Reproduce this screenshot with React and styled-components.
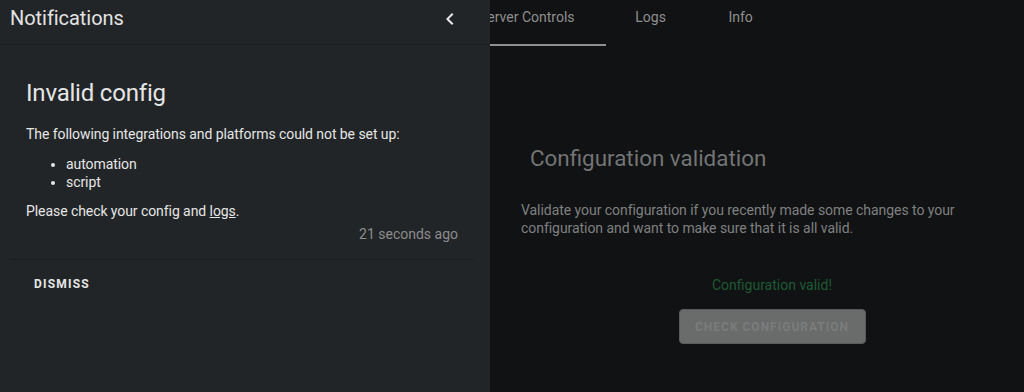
import React from "react";
import styled, { createGlobalStyle } from "styled-components";

const Global = createGlobalStyle`
  html, body { margin: 0; padding: 0; background: #111213; }
  body { font-family: Roboto, "Noto Sans", "Liberation Sans", sans-serif; }
  * { box-sizing: border-box; }
`;

const Page = styled.div`
  position: relative;
  width: 1024px;
  height: 392px;
  overflow: hidden;
  background: #111213;
`;

const Main = styled.div`
  display: flex;
  flex-direction: column;
  padding-left: 448px;
`;

const Tabs = styled.div`
  display: flex;
  height: 46px;
`;

const Tab = styled.div`
  display: flex;
  align-items: center;
  justify-content: center;
  height: 46px;
  padding: 0 ${(p) => (p.$wide ? 31 : 0)}px 11px;
  min-width: 90px;
  font-size: 14px;
  color: #8e8f90;
  border-bottom: 2px solid ${(p) => (p.$active ? "#8f9091" : "transparent")};
`;

const Card = styled.div`
  margin-left: 57px;
  margin-top: 86px;
  width: 534px;
  display: flex;
  flex-direction: column;
`;

const CardHeader = styled.div`
  padding: 10px 25px 0;
  font-size: 22.4px;
  line-height: 32px;
  color: #737475;
`;

const CardText = styled.p`
  margin: 27px 0 0;
  padding: 0 16px;
  font-size: 14px;
  line-height: 18px;
  letter-spacing: -0.05px;
  color: #7f8081;
`;

const ValidMsg = styled.div`
  margin-top: 40px;
  text-align: center;
  font-size: 14px;
  color: #1e5a33;
`;

const CheckButton = styled.div`
  align-self: center;
  margin-top: 16px;
  width: 187px;
  height: 35px;
  border-radius: 4px;
  background: #6a6b6b;
  border: 1px solid #5a5b5b;
  display: flex;
  align-items: center;
  justify-content: center;
  font-size: 12px;
  font-weight: 700;
  letter-spacing: 1px;
  color: #7b7c7c;
`;

const Drawer = styled.aside`
  position: absolute;
  left: 0;
  top: 0;
  width: 490px;
  height: 392px;
  background: #222527;
  display: flex;
  flex-direction: column;
`;

const DrawerHeader = styled.div`
  height: 45px;
  display: flex;
  align-items: center;
  justify-content: space-between;
  padding: 0 0 8px 10px;
  border-bottom: 1px solid #1c1e20;
`;

const DrawerTitle = styled.div`
  font-size: 20px;
  letter-spacing: -0.05px;
  color: #e3e3e3;
`;

const IconButton = styled.div`
  width: 24px;
  height: 24px;
  margin-right: 28px;
  margin-top: 2px;
  color: #e8e8e8;
  display: flex;
`;

const Notification = styled.div`
  margin: 0 16px 0 10px;
  display: flex;
  flex-direction: column;
`;

const NoteBody = styled.div`
  padding: 32px 16px 16px;
`;

const NoteTitle = styled.div`
  font-size: 24px;
  line-height: 32px;
  letter-spacing: -0.2px;
  color: #e6e6e6;
`;

const Para = styled.p`
  margin: ${(p) => (p.$tight ? 11 : 16)}px 0 0;
  font-size: 14px;
  line-height: 18px;
  letter-spacing: -0.07px;
  color: #e6e6e6;
`;

const List = styled.ul`
  margin: 12px 0 0;
  padding-left: 40px;
  font-size: 14px;
  line-height: 18px;
  letter-spacing: -0.07px;
  color: #e6e6e6;
`;

const Link = styled.span`
  text-decoration: underline;
`;

const Time = styled.div`
  margin-top: 5px;
  text-align: right;
  font-size: 14px;
  line-height: 18px;
  color: #8b8c8d;
`;

const Actions = styled.div`
  border-top: 1px solid #1b1d1f;
  padding: 8px;
`;

const TextButton = styled.div`
  padding: 8px 16px;
  font-size: 12px;
  font-weight: 700;
  letter-spacing: 1.2px;
  color: #e6e6e6;
  line-height: 16px;
`;

export default function App() {
  return (
    <Page>
      <Global />
      <Main>
        <Tabs>
          <Tab $active $wide>Server Controls</Tab>
          <Tab>Logs</Tab>
          <Tab>Info</Tab>
        </Tabs>
        <Card>
          <CardHeader>Configuration validation</CardHeader>
          <CardText>
            Validate your configuration if you recently made some changes to your
            configuration and want to make sure that it is all valid.
          </CardText>
          <ValidMsg>Configuration valid!</ValidMsg>
          <CheckButton>CHECK CONFIGURATION</CheckButton>
        </Card>
      </Main>
      <Drawer>
        <DrawerHeader>
          <DrawerTitle>Notifications</DrawerTitle>
          <IconButton>
            <svg width="24" height="24" viewBox="0 0 24 24">
              <path fill="currentColor" d="M15.41,16.58L10.83,12L15.41,7.41L14,6L8,12L14,18L15.41,16.58Z" />
            </svg>
          </IconButton>
        </DrawerHeader>
        <Notification>
          <NoteBody>
            <NoteTitle>Invalid config</NoteTitle>
            <Para>The following integrations and platforms could not be set up:</Para>
            <List>
              <li>automation</li>
              <li>script</li>
            </List>
            <Para $tight>
              Please check your config and <Link>logs</Link>.
            </Para>
            <Time>21 seconds ago</Time>
          </NoteBody>
          <Actions>
            <TextButton>DISMISS</TextButton>
          </Actions>
        </Notification>
      </Drawer>
    </Page>
  );
}
